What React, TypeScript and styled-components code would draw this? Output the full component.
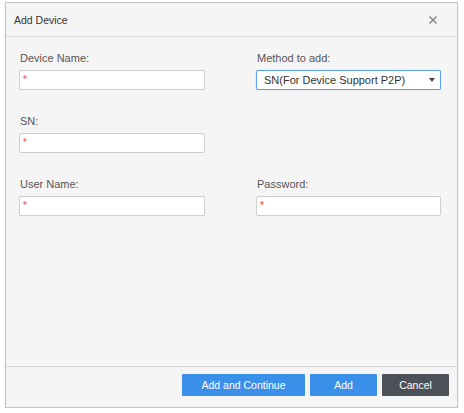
import React from 'react';
import styled, { createGlobalStyle } from 'styled-components';

const GlobalStyle = createGlobalStyle`
  html, body {
    margin: 0;
    padding: 0;
    background: #ffffff;
  }

  body {
    font-family: 'Liberation Sans', Arial, sans-serif;
    font-size: 11px;
    color: #333;
  }
`;

const Page = styled.div`
  padding: 2px 0 0 5px;
`;

const Dialog = styled.div`
  width: 453px;
  height: 406px;
  box-sizing: border-box;
  display: flex;
  flex-direction: column;
  background: #f5f5f5;
  border: 1px solid #c4c4c4;
  box-shadow: 0 1px 2px rgba(0, 0, 0, 0.12);
`;

const Header = styled.div`
  height: 33px;
  display: flex;
  align-items: center;
  justify-content: space-between;
  padding: 0 17px 0 8px;
  border-bottom: 1px solid #dcdcdc;
`;

const Title = styled.span`
  font-size: 10.5px;
  color: #333;
`;

const CloseButton = styled.button`
  width: 14px;
  height: 14px;
  padding: 0;
  border: none;
  background: transparent;
  cursor: pointer;
  display: flex;
  align-items: center;
  justify-content: center;
  color: #8a8a8a;
`;

const Body = styled.div`
  flex: 1;
  padding: 15px 16px 0 13px;
  display: grid;
  grid-template-columns: 186px 185px;
  grid-auto-rows: 38px;
  column-gap: 51px;
  row-gap: 25px;
  align-content: start;
`;

const Field = styled.div`
  display: flex;
  flex-direction: column;
`;

const Label = styled.label`
  font-size: 11px;
  line-height: 13px;
  color: #555;
  margin-bottom: 5px;
  padding-left: 1px;
`;

const InputBox = styled.div<{ $focused?: boolean }>`
  position: relative;
  height: 20px;
  box-sizing: border-box;
  background: #fff;
  border: 1px solid ${({ $focused }) => ($focused ? '#5aa3ec' : '#cfcfcf')};
  border-radius: 2px;
  box-shadow: ${({ $focused }) => ($focused ? '0 0 1px rgba(58, 142, 230, 0.5)' : 'none')};
  display: flex;
  align-items: center;
`;

const Required = styled.span`
  position: absolute;
  left: 3px;
  top: 4px;
  font-size: 10px;
  line-height: 10px;
  color: #f04646;
`;

const SelectText = styled.span`
  flex: 1;
  padding-left: 7px;
  font-size: 11px;
  color: #333;
  white-space: nowrap;
`;

const Caret = styled.span`
  width: 0;
  height: 0;
  margin-right: 5px;
  border-left: 3.5px solid transparent;
  border-right: 3.5px solid transparent;
  border-top: 4px solid #444;
`;

const Footer = styled.div`
  display: flex;
  justify-content: flex-end;
  gap: 5px;
  padding: 7px 8px 11px;
  border-top: 1px solid #d6d6d6;
`;

const Button = styled.button<{ $dark?: boolean; $width: number }>`
  width: ${({ $width }) => $width}px;
  height: 22px;
  padding: 0;
  border: none;
  border-radius: 1px;
  background: ${({ $dark }) => ($dark ? '#4b5157' : '#3a8fe8')};
  color: #fff;
  font-family: 'Liberation Sans', Arial, sans-serif;
  font-size: 10.5px;
  cursor: pointer;
`;

interface TextFieldProps {
  label: string;
}

function TextField ({ label }: TextFieldProps): React.ReactElement {
  return (
    <Field>
      <Label>{label}</Label>
      <InputBox>
        <Required>*</Required>
      </InputBox>
    </Field>
  );
}

export default function App (): React.ReactElement {
  return (
    <Page>
      <GlobalStyle />
      <Dialog>
        <Header>
          <Title>Add Device</Title>
          <CloseButton aria-label='Close'>
            <svg width='10' height='10' viewBox='0 0 10 10'>
              <path d='M1.5 1.5 L8.5 8.5 M8.5 1.5 L1.5 8.5' stroke='currentColor' strokeWidth='1.6' />
            </svg>
          </CloseButton>
        </Header>
        <Body>
          <TextField label='Device Name:' />
          <Field>
            <Label>Method to add:</Label>
            <InputBox $focused>
              <SelectText>SN(For Device Support P2P)</SelectText>
              <Caret />
            </InputBox>
          </Field>
          <TextField label='SN:' />
          <div />
          <TextField label='User Name:' />
          <TextField label='Password:' />
        </Body>
        <Footer>
          <Button $width={123}>Add and Continue</Button>
          <Button $width={67}>Add</Button>
          <Button $dark $width={67}>Cancel</Button>
        </Footer>
      </Dialog>
    </Page>
  );
}
